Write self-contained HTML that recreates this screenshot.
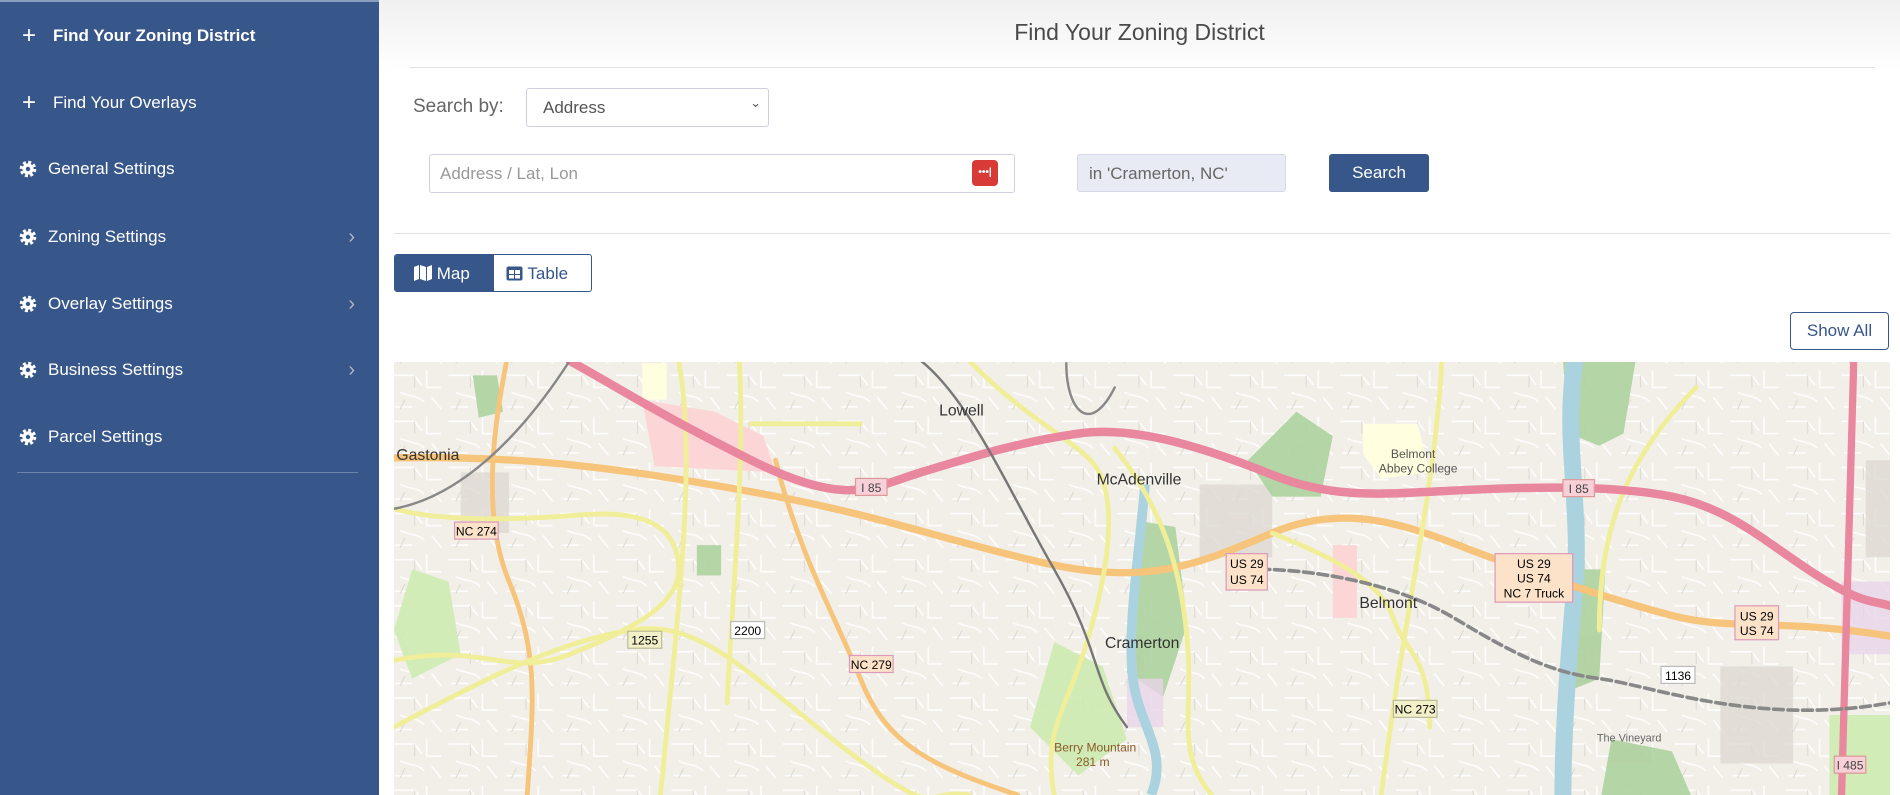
<!DOCTYPE html>
<html><head><meta charset="utf-8"><style>
*{box-sizing:border-box;margin:0;padding:0}
body{width:1900px;height:795px;overflow:hidden;font-family:"Liberation Sans",sans-serif;background:#fff;position:relative}
#side{position:absolute;left:0;top:0;width:379px;height:795px;background:#37568a;border-top:2px solid #8b9fc0}
.it{position:absolute;left:0;width:379px;color:#fff;font-size:17px;height:30px;line-height:30px}
.it .ic{position:absolute;left:19px;top:6px;width:18px;height:18px}
.it .tx{position:absolute;left:48px}
.it.p .ic{top:0}
.it.p .tx{left:53px}
.chev{position:absolute;right:24px;top:0;color:#aab6cc;font-size:20px}
.abs{position:absolute}
#top{position:absolute;left:379px;top:0;width:1521px;height:70px;background:linear-gradient(#f0f0f0,#fff)}
</style></head><body>
<svg width="0" height="0" style="position:absolute"><defs><symbol id="g" viewBox="0 0 18 18"><circle cx="9" cy="9" r="5.6" fill="#fff"/><circle cx="9" cy="9" r="6.6" fill="none" stroke="#fff" stroke-width="3.4" stroke-dasharray="2.9 2.28"/><circle cx="9" cy="9" r="2.2" fill="#37568a"/></symbol></defs></svg>
<div id="side">
<div class="it p" style="top:19px;font-weight:bold"><span class="ic" style="left:22px;font-size:24px;font-weight:normal;line-height:30px">+</span><span class="tx">Find Your Zoning District</span></div>
<div class="it p" style="top:86px"><span class="ic" style="left:22px;font-size:24px;line-height:30px">+</span><span class="tx">Find Your Overlays</span></div>
<div class="it" style="top:152px"><svg class="ic"><use href="#g"/></svg><span class="tx">General Settings</span></div>
<div class="it" style="top:220px"><svg class="ic"><use href="#g"/></svg><span class="tx">Zoning Settings</span><span class="chev">›</span></div>
<div class="it" style="top:287px"><svg class="ic"><use href="#g"/></svg><span class="tx">Overlay Settings</span><span class="chev">›</span></div>
<div class="it" style="top:353px"><svg class="ic"><use href="#g"/></svg><span class="tx">Business Settings</span><span class="chev">›</span></div>
<div class="it" style="top:420px"><svg class="ic"><use href="#g"/></svg><span class="tx">Parcel Settings</span></div>
<div class="abs" style="left:17px;top:470px;width:341px;height:1px;background:#6b83aa"></div>
</div>
<div id="top"></div>
<div class="abs" style="left:379px;top:19px;width:1521px;text-align:center;font-size:23px;color:#4a4a4a">Find Your Zoning District</div>
<div class="abs" style="left:410px;top:67px;width:1465px;height:1px;background:#e2e2e2"></div>
<div class="abs" style="left:413px;top:96px;font-size:19px;color:#666">Search by:</div>
<div class="abs" style="left:526px;top:88px;width:243px;height:39px;border:1px solid #cfcfe0;border-radius:3px;font-size:17px;color:#555;padding:9px 0 0 16px">Address<span style="position:absolute;right:7px;top:6px;font-size:13px">&#8964;</span></div>
<div class="abs" style="left:429px;top:154px;width:586px;height:39px;border:1px solid #d0d0e0;border-radius:3px;font-size:17px;color:#999;padding:9px 0 0 10px">Address / Lat, Lon</div>
<div class="abs" style="left:972px;top:160px;width:26px;height:26px;background:#d83b36;border-radius:4px;color:#fff;font-size:10px;line-height:26px;text-align:center;font-weight:bold">•••|</div>
<div class="abs" style="left:1077px;top:154px;width:209px;height:38px;background:#e8ebf3;border:1px solid #d5d8e6;border-radius:3px;font-size:17px;color:#666;padding:9px 0 0 11px">in 'Cramerton, NC'</div>
<div class="abs" style="left:1329px;top:154px;width:100px;height:38px;background:#37568a;border-radius:3px;color:#fff;font-size:17px;text-align:center;line-height:38px">Search</div>
<div class="abs" style="left:394px;top:233px;width:1496px;height:1px;background:#e2e2e2"></div>
<div class="abs" style="left:394px;top:254px;width:198px;height:38px;border:1px solid #37568a;border-radius:3px;overflow:hidden">
<div class="abs" style="left:0;top:0;width:99px;height:38px;background:#37568a;color:#fff;font-size:17px;line-height:37px;padding-left:19px"><svg width="18" height="16" viewBox="0 0 18 16" style="vertical-align:-2px"><path d="M0 2l5-2v14l-5 2zM6 0l6 2v14l-6-2zM13 2l5-2v14l-5 2z" fill="#fff"/></svg> Map</div>
<div class="abs" style="left:99px;top:0;width:99px;height:38px;color:#37568a;font-size:17px;line-height:37px;padding-left:12px"><svg width="17" height="15" viewBox="0 0 17 15" style="vertical-align:-2px"><rect x="0.5" y="0.5" width="16" height="14" rx="2" fill="#37568a"/><rect x="3" y="4" width="5" height="4" fill="#fff"/><rect x="9" y="4" width="5" height="4" fill="#fff"/><rect x="3" y="9" width="5" height="3.5" fill="#fff"/><rect x="9" y="9" width="5" height="3.5" fill="#fff"/></svg> Table</div>
</div>
<div class="abs" style="left:1790px;top:312px;width:99px;height:38px;border:1px solid #37568a;border-radius:4px;color:#37568a;font-size:17px;text-align:center;line-height:36px">Show All</div>
<svg class="abs" style="left:394px;top:362px" width="1496" height="433" viewBox="325 299 1235 357" preserveAspectRatio="none">
<defs><pattern id="st" width="46" height="38" patternUnits="userSpaceOnUse"><path d="M2 6h18l6 8M30 2v14h12M8 20c8 4 14 2 20 8M34 24l8 10M4 32h14" stroke="#fff" stroke-width="1.3" fill="none"/><path d="M20 6v10M12 26l-4 8" stroke="#d8d4cc" stroke-width=".8"/></pattern></defs>
<rect x="325" y="299" width="1235" height="357" fill="#f2efe9"/>
<rect x="325" y="299" width="1235" height="357" fill="url(#st)" opacity=".9"/>
<g fill="#ddd9d2" opacity=".8"><path d="M380 390h40v50h-40z"/><path d="M990 400h60v60h-60z"/><path d="M1420 550h60v80h-60z"/><path d="M1540 380h20v80h-20z"/></g>
<g fill="#add19e" opacity=".9">
<path d="M1290 298h60l-10 60-20 10-25-10z"/><path d="M1070 340l30 20-10 50-40 0-20-30z"/><path d="M940 430l30 5 10 80-20 60-30-20z"/><path d="M1305 470h20l-5 90-25 10z"/><path d="M870 530l40 20 20 60-40 30-40-40z" fill="#cdebb0"/><path d="M340 470l30 10 10 60-40 20-15-40z" fill="#cdebb0"/><path d="M1330 610l50 10 20 46h-80z"/><path d="M1510 590h50v66h-50z" fill="#cdebb0"/><path d="M390 310h20l5 30-20 5z"/><path d="M575 450h20v25h-20z"/>
</g>
<g fill="#fcd6d6"><path d="M530 330l60 10 40 20 10 30-100-5z"/><path d="M1100 450h20v60h-20z"/></g>
<g fill="#ffffe0"><path d="M1125 350l45 0 10 40-40 5-15-20z"/><path d="M530 300h20v30h-20z"/></g>
<g fill="#e8d5e8" opacity=".8"><path d="M1520 480h40v60h-40z"/><path d="M930 560h30v40h-30z"/></g>
<path d="M1300 298 C1290 360 1305 420 1300 480 C1295 540 1290 600 1290 656" stroke="#aad3df" stroke-width="14" fill="none"/>
<path d="M945 400 C940 460 930 520 935 560 C940 600 965 620 950 656" stroke="#aad3df" stroke-width="8" fill="none"/>
<g fill="none" stroke-linecap="round">
<path d="M325 378 C440 376 520 388 620 406 S760 440 850 462 S980 470 1050 440 S1180 442 1230 460 S1330 495 1380 508 S1470 510 1560 525" stroke="#f6c47a" stroke-width="6"/>
<path d="M418 298 C410 340 395 420 420 480 S440 580 435 656" stroke="#f6c47a" stroke-width="4"/>
<path d="M640 380 C660 460 690 510 710 560 S760 630 840 656" stroke="#f6c47a" stroke-width="4"/>
<g stroke="#f1ee9a" stroke-width="4">
<path d="M325 420 C360 430 420 430 480 425 S560 440 560 470 S520 520 470 540 S400 530 325 545"/>
<path d="M560 298 C575 380 560 500 545 656"/><path d="M620 350h90"/><path d="M800 298 C840 340 880 360 900 380 S920 450 900 520 S860 600 870 656"/>
<path d="M920 370 C960 420 975 470 980 530 S970 620 1000 656"/><path d="M1190 298 C1185 400 1160 500 1140 656"/><path d="M1400 320 C1340 380 1320 440 1320 520"/><path d="M325 600 C400 560 460 530 520 520 S620 560 700 620 S760 650 800 656"/>
<path d="M1050 440 C1100 460 1140 480 1150 510 S1180 540 1180 600"/><path d="M610 298 C615 380 605 480 600 580"/>
</g>
<path d="M470 298 C510 320 540 340 620 380 S720 402 760 390 S840 365 890 358 S1000 372 1050 392 S1140 408 1200 405 S1330 400 1380 410 S1460 450 1500 475 S1545 495 1560 500" stroke="#e8879e" stroke-width="7"/>
<path d="M1530 298 C1528 400 1525 500 1520 656" stroke="#e8879e" stroke-width="6"/>
<path d="M760 298 C800 330 830 400 870 470 S900 560 930 600" stroke="#777" stroke-width="2"/>
<path d="M1040 470 C1080 470 1150 480 1200 510 S1280 555 1320 560 S1450 600 1560 580" stroke="#888" stroke-width="3" stroke-dasharray="8 4"/>
<path d="M325 420 C380 410 430 360 470 298" stroke="#888" stroke-width="2"/>
<path d="M880 300 C880 340 900 360 920 320" stroke="#888" stroke-width="2"/>
</g>
<g font-family="Liberation Sans,sans-serif" fill="#333">
<text x="327" y="380" font-size="13">Gastonia</text><text x="775" y="343" font-size="13">Lowell</text><text x="905" y="400" font-size="13">McAdenville</text><text x="1122" y="502" font-size="13">Belmont</text><text x="912" y="535" font-size="13">Cramerton</text>
<text x="1148" y="378" font-size="10" fill="#555">Belmont</text><text x="1138" y="390" font-size="10" fill="#555">Abbey College</text><text x="870" y="620" font-size="10" fill="#8b5a2b">Berry Mountain</text><text x="888" y="632" font-size="10" fill="#8b5a2b">281 m</text>
<text x="1318" y="612" font-size="9" fill="#666">The Vineyard</text>
</g>
<g font-family="Liberation Sans,sans-serif" font-size="10" text-anchor="middle">
<rect x="706" y="395" width="26" height="14" fill="#f7d0d8" stroke="#d99"/><text x="719" y="406" fill="#444">I 85</text>
<rect x="1290" y="396" width="26" height="14" fill="#f7d0d8" stroke="#d99"/><text x="1303" y="407" fill="#444">I 85</text>
<rect x="1514" y="624" width="26" height="14" fill="#f7d0d8" stroke="#d99"/><text x="1527" y="635" fill="#444">I 485</text>
<rect x="1012" y="457" width="34" height="30" fill="#fbe2c8" stroke="#d9b"/><text x="1029" y="469">US 29</text><text x="1029" y="482">US 74</text>
<rect x="1234" y="457" width="64" height="40" fill="#fbe2c8" stroke="#d9b"/><text x="1266" y="469">US 29</text><text x="1266" y="481">US 74</text><text x="1266" y="493">NC 7 Truck</text>
<rect x="1432" y="500" width="36" height="28" fill="#fbe2c8" stroke="#d9b"/><text x="1450" y="512">US 29</text><text x="1450" y="524">US 74</text>
<rect x="375" y="431" width="36" height="14" fill="#fbe2c8" stroke="#d9b"/><text x="393" y="442">NC 274</text>
<rect x="701" y="541" width="36" height="14" fill="#fbe2c8" stroke="#d9b"/><text x="719" y="552">NC 279</text>
<rect x="1150" y="578" width="36" height="14" fill="#f2f0c8" stroke="#bb9"/><text x="1168" y="589">NC 273</text>
<rect x="518" y="521" width="28" height="14" fill="#f2f0c8" stroke="#bb9"/><text x="532" y="532">1255</text>
<rect x="603" y="513" width="28" height="14" fill="#fff" stroke="#bbb"/><text x="617" y="524">2200</text>
<rect x="1371" y="550" width="28" height="14" fill="#fff" stroke="#bbb"/><text x="1385" y="561">1136</text>
</g>
</svg>
</body></html>
